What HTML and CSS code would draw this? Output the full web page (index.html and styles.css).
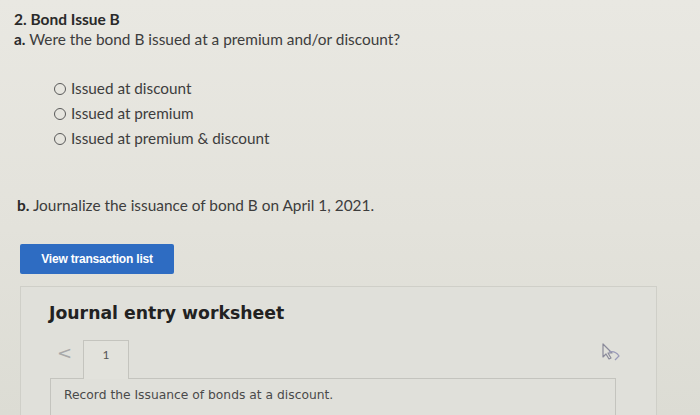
FILE: index.html
```html
<!DOCTYPE html>
<html>
<head>
<meta charset="utf-8">
<link rel="stylesheet" href="styles.css">
</head>
<body>
<div class="page">
  <div class="q-title">2. Bond Issue B</div>
  <div class="q-line"><span class="lbl">a.</span> Were the bond B issued at a premium and/or discount?</div>
  <ul class="options">
    <li><span class="radio"></span>Issued at discount</li>
    <li><span class="radio"></span>Issued at premium</li>
    <li><span class="radio"></span>Issued at premium &amp; discount</li>
  </ul>
  <div class="q-line part-b"><span class="lbl">b.</span> Journalize the issuance of bond B on April 1, 2021.</div>
  <button class="btn">View transaction list</button>
  <div class="worksheet">
    <div class="ws-head">
      <h2 class="ws-title">Journal entry worksheet</h2>
    </div>
    <div class="tabs">
      <span class="prev">&lt;</span>
      <span class="tab">1</span>
      <svg class="cursor" width="24" height="22" viewBox="0 0 24 22">
        <path d="M3 2 L3 15 L6 12 L9 17 L11 16 L8 11 L12 11 Z" fill="none" stroke="#8a8a9a" stroke-width="1.2" stroke-linejoin="round"/>
        <path d="M9 10 C13 9 17 11 19 14 L15 18" fill="none" stroke="#9a9ab8" stroke-width="1.3"/>
      </svg>
    </div>
    <div class="panel">
      <p class="instr">Record the Issuance of bonds at a discount.</p>
    </div>
  </div>
</div>
</body>
</html>
```

FILE: styles.css
```css
html, body {
  margin: 0;
  padding: 0;
}
body {
  width: 700px;
  height: 415px;
  overflow: hidden;
  background: linear-gradient(180deg, #e9e8e2 0%, #e3e2db 55%, #dcdcd4 100%);
  font-family: Lato, "Open Sans", sans-serif;
  color: #3a3a3a;
}
.page {
  padding: 10px 0 0 14px;
}
.q-title {
  font-weight: bold;
  font-size: 15.5px;
  color: #2a2a2a;
  line-height: 18px;
}
.q-line {
  font-size: 15.4px;
  line-height: 22px;
  color: #3d3d3d;
}
.lbl {
  font-weight: bold;
  color: #2a2a2a;
}
.options {
  list-style: none;
  margin: 26px 0 0 40px;
  padding: 0;
}
.options li {
  display: flex;
  align-items: center;
  font-size: 15.3px;
  line-height: 25px;
  color: #3d3d3d;
}
.radio {
  width: 10px;
  height: 10px;
  border: 1.5px solid #5a5a5a;
  border-radius: 50%;
  margin-right: 5px;
  box-sizing: content-box;
}
.part-b {
  margin-top: 43px;
  padding-left: 3px;
}
.btn {
  display: block;
  margin: 28px 0 0 6px;
  width: 154px;
  height: 30px;
  background: #2e6cc2;
  border: none;
  border-radius: 2px;
  color: #fff;
  font-family: "Liberation Sans", Arial, sans-serif;
  font-weight: bold;
  font-size: 12px;
  letter-spacing: -0.2px;
}
.worksheet {
  margin: 12px 0 0 6px;
  width: 637px;
  height: 140px;
  border: 1px solid #cfcfc8;
  background: #e0e0da;
  box-sizing: border-box;
  font-family: "DejaVu Sans", Verdana, sans-serif;
}
.ws-head {
  padding: 15px 0 0 28px;
}
.ws-title {
  margin: 0;
  font-size: 17.3px;
  font-weight: bold;
  color: #222;
  line-height: 22px;
}
.tabs {
  display: flex;
  align-items: flex-end;
  margin-top: 15px;
  padding-left: 36px;
  height: 39px;
  position: relative;
}
.prev {
  align-self: flex-start;
  margin-top: 3px;
  color: #a8a8a8;
  font-size: 18px;
  font-family: "DejaVu Sans ExtraLight", "DejaVu Sans", sans-serif;
  width: 26px;
}
.tab {
  width: 46px;
  height: 39px;
  border: 1px solid #c4c4be;
  border-bottom: none;
  background: #e2e2dc;
  box-sizing: border-box;
  text-align: center;
  font-family: Lato, sans-serif;
  font-size: 12px;
  line-height: 28px;
  color: #555;
  margin-bottom: -1px;
}
.cursor {
  position: absolute;
  left: 579px;
  top: 3px;
}
.panel {
  margin-left: 29px;
  width: 566px;
  height: 40px;
  border-top: 1px solid #c4c4be;
  border-left: 1px solid #c4c4be;
  border-right: 1px solid #c4c4be;
  box-sizing: border-box;
}
.instr {
  margin: 9px 0 0 13px;
  font-size: 12.3px;
  color: #4a4a4a;
}
```
